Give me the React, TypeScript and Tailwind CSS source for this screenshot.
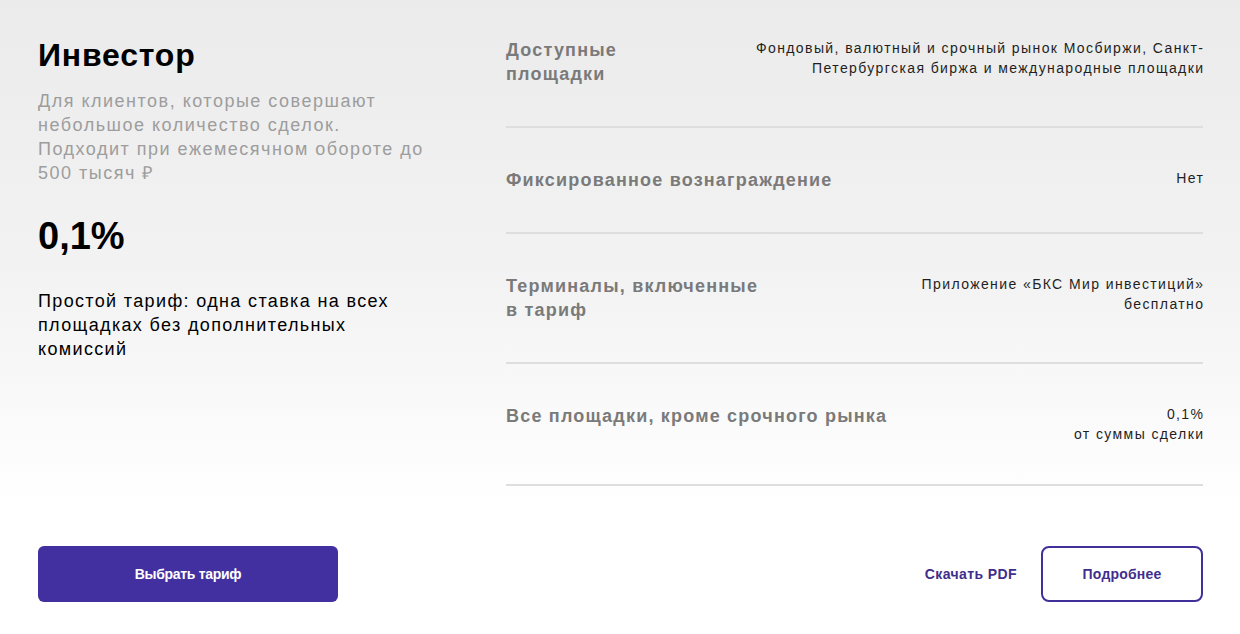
const rows = [
  {
    label: ["Доступные", "площадки"],
    value: ["Фондовый, валютный и срочный рынок Мосбиржи, Санкт-", "Петербургская биржа и международные площадки"],
  },
  { label: ["Фиксированное вознаграждение"], value: ["Нет"] },
  {
    label: ["Терминалы, включенные", "в тариф"],
    value: ["Приложение «БКС Мир инвестиций»", "бесплатно"],
  },
  { label: ["Все площадки, кроме срочного рынка"], value: ["0,1%", "от суммы сделки"] },
]

const TariffRow = ({ label, value, first }: { label: string[]; value: string[]; first?: boolean }) => {
  return (
    <div
      className={`flex items-start justify-between border-b-2 border-[#dedede] pb-10 ${first ? "pt-0" : "pt-10"}`}
    >
      <p className="text-[18px] font-bold leading-[24px] tracking-[1.2px] text-[#7a7a7a]">
        {label.map((l, i) => (
          <span key={i} className="block">
            {l}
          </span>
        ))}
      </p>
      <p className="-mr-[1.4px] text-right text-[14px] leading-[20px] tracking-[1.4px] text-[#1f1f1f]">
        {value.map((v, i) => (
          <span key={i} className="block">
            {v}
          </span>
        ))}
      </p>
    </div>
  )
}

export default function App() {
  return (
    <div className="min-h-[634px] w-full bg-[linear-gradient(180deg,#ebebeb_0%,#f3f3f3_45%,#ffffff_80%)] font-['Liberation_Sans',Arial,sans-serif]">
      <div className="flex pl-[38px] pr-[37px] pt-[38px]">
        <div className="w-[468px] shrink-0">
          <h1 className="mt-px text-[32px] font-bold leading-[32px] tracking-[0.8px] text-black">Инвестор</h1>
          <p className="mt-[18px] text-[18px] leading-[24px] tracking-[1.5px] text-[#9d9d9d]">
            Для клиентов, которые совершают
            <br />
            небольшое количество сделок.
            <br />
            Подходит при ежемесячном обороте до
            <br />
            500 тысяч ₽
          </p>
          <p className="mt-[32px] text-[38px] font-bold leading-[38px] text-black">0,1%</p>
          <p className="mt-[34px] w-[390px] text-[18px] leading-[24px] tracking-[1.35px] text-black">
            Простой тариф: одна ставка на всех площадках без дополнительных комиссий
          </p>
        </div>
        <div className="flex-1">
          {rows.map((r, i) => (
            <TariffRow key={i} label={r.label} value={r.value} first={i === 0} />
          ))}
        </div>
      </div>
      <div className="flex items-center justify-between pl-[38px] pr-[37px] pt-[60px] pb-8">
        <button className="h-[56px] w-[300px] rounded-[6px] bg-[#4330a0] text-[14px] font-bold tracking-[-0.3px] text-white">
          Выбрать тариф
        </button>
        <div className="flex items-center gap-6">
          <a className="text-[14px] font-bold tracking-[0.4px] text-[#3f2e8c]">Скачать PDF</a>
          <button className="h-[56px] w-[162px] rounded-[8px] border-2 border-[#42309a] bg-white text-[14px] font-bold tracking-[0.2px] text-[#3f2e8c]">
            Подробнее
          </button>
        </div>
      </div>
    </div>
  )
}
